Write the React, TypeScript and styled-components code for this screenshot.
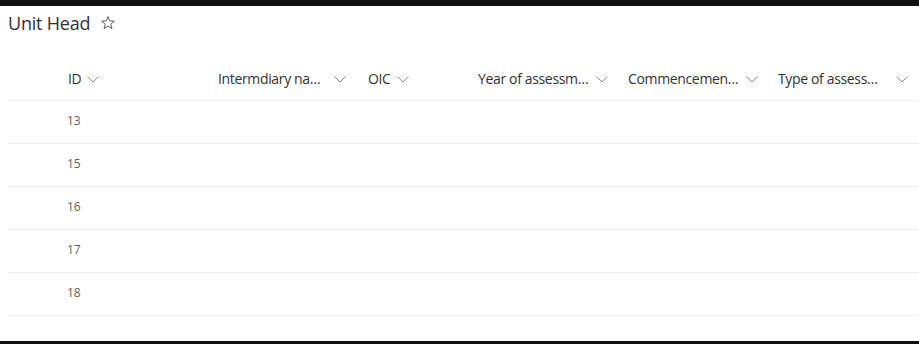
import React from "react";
import styled, { createGlobalStyle } from "styled-components";

const GlobalStyle = createGlobalStyle`
  html, body { margin: 0; padding: 0; background: #ffffff; }
  body { font-family: "Segoe UI", "Open Sans", "Noto Sans", sans-serif; color: #323130; }
  * { box-sizing: border-box; }
`;

const Page = styled.div`
  width: 919px;
  height: 344px;
  display: flex;
  flex-direction: column;
  overflow: hidden;
  background: #ffffff;
`;

const TopBar = styled.div`
  height: 6px;
  flex-shrink: 0;
  background: #111111;
`;

const BottomBar = styled.div`
  height: 3px;
  flex-shrink: 0;
  background: #111111;
`;

const Main = styled.div`
  flex: 1;
  padding-left: 8px;
  display: flex;
  flex-direction: column;
`;

const TitleRow = styled.div`
  height: 32px;
  margin-top: 1px;
  margin-bottom: 19px;
  display: flex;
  align-items: center;
  gap: 10px;
`;

const Title = styled.h1`
  margin: 0;
  font-size: 18px;
  font-weight: 400;
  color: #323130;
  letter-spacing: -0.2px;
`;

const StarButton = styled.span`
  display: inline-flex;
  width: 16px;
  height: 16px;
  color: #605e5c;
`;

const HeaderRow = styled.div`
  display: flex;
  height: 43px;
  padding-bottom: 1px;
  border-bottom: 1px solid #edebe9;
`;

const DataRow = styled.div`
  display: flex;
  height: 43px;
  padding-bottom: 4px;
  border-bottom: 1px solid #edebe9;
`;

const Spacer = styled.div`
  width: 48px;
  flex-shrink: 0;
`;

const HeaderCell = styled.div<{ $w: number }>`
  width: ${(p) => p.$w}px;
  flex-shrink: 0;
  display: flex;
  align-items: center;
  padding: 0 8px 0 12px;
  font-size: 14px;
  letter-spacing: -0.35px;
  color: #323130;
`;

const HeaderText = styled.span<{ $max?: number }>`
  flex: 0 1 auto;
  min-width: 0;
  max-width: ${(p) => (p.$max ? `${p.$max}px` : "none")};
  white-space: nowrap;
  overflow: hidden;
  text-overflow: ellipsis;
`;

const Chevron = styled.svg`
  flex-shrink: 0;
  margin-left: 6px;
  width: 12px;
  height: 7px;
  color: #8a8886;
  margin-top: 1px;
`;

const DataCell = styled.div<{ $w: number }>`
  width: ${(p) => p.$w}px;
  flex-shrink: 0;
  display: flex;
  align-items: center;
  padding: 0 8px 0 11px;
  font-size: 12px;
  color: #605e5c;
`;

const columns: { label: string; w: number; max?: number }[] = [
  { label: "ID", w: 150 },
  { label: "Intermdiary name", w: 150, max: 110 },
  { label: "OIC", w: 110 },
  { label: "Year of assessment", w: 150 },
  { label: "Commencement date", w: 150 },
  { label: "Type of assessment", w: 150 },
];

const rows = [13, 15, 16, 17, 18];

const ChevronDown = () => (
  <Chevron viewBox="0 0 12 7" fill="none">
    <path d="M0.5 0.5 L6 6 L11.5 0.5" stroke="currentColor" strokeWidth="1" />
  </Chevron>
);

const StarIcon = () => (
  <StarButton>
    <svg viewBox="0 0 16 16" width="16" height="16" fill="none">
      <path
        d="M8 1.6 L9.75 5.9 L14.3 6.2 L10.8 9.1 L11.95 13.6 L8 11.1 L4.05 13.6 L5.2 9.1 L1.7 6.2 L6.25 5.9 Z"
        stroke="currentColor"
        strokeWidth="1"
        strokeLinejoin="round"
      />
    </svg>
  </StarButton>
);

export default function App() {
  return (
    <Page>
      <GlobalStyle />
      <TopBar />
      <Main>
        <TitleRow>
          <Title>Unit Head</Title>
          <StarIcon />
        </TitleRow>
        <HeaderRow>
          <Spacer />
          {columns.map((c) => (
            <HeaderCell key={c.label} $w={c.w}>
              <HeaderText $max={c.max}>{c.label}</HeaderText>
              <ChevronDown />
            </HeaderCell>
          ))}
        </HeaderRow>
        {rows.map((id) => (
          <DataRow key={id}>
            <Spacer />
            <DataCell $w={150}>{id}</DataCell>
          </DataRow>
        ))}
      </Main>
      <BottomBar />
    </Page>
  );
}
